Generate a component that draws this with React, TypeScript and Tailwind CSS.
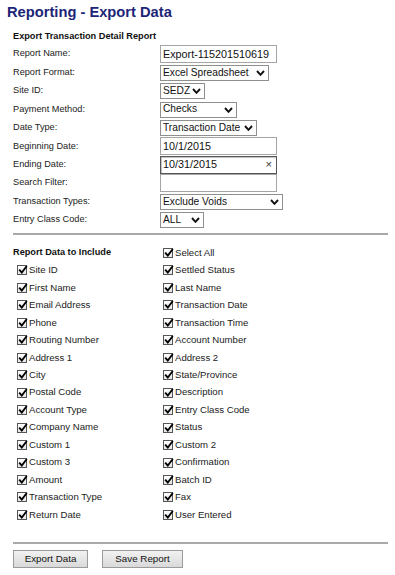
import React from "react";

const leftFields = [
  "Site ID",
  "First Name",
  "Email Address",
  "Phone",
  "Routing Number",
  "Address 1",
  "City",
  "Postal Code",
  "Account Type",
  "Company Name",
  "Custom 1",
  "Custom 3",
  "Amount",
  "Transaction Type",
  "Return Date",
];

const rightFields = [
  "Select All",
  "Settled Status",
  "Last Name",
  "Transaction Date",
  "Transaction Time",
  "Account Number",
  "Address 2",
  "State/Province",
  "Description",
  "Entry Class Code",
  "Status",
  "Custom 2",
  "Confirmation",
  "Batch ID",
  "Fax",
  "User Entered",
];

function Chevron() {
  return (
    <svg width="9" height="6" viewBox="0 0 9 6" className="shrink-0">
      <polyline points="1,1 4.5,4.8 8,1" fill="none" stroke="#111" strokeWidth="1.9" />
    </svg>
  );
}

function Select({ value, width }: { value: string; width: string }) {
  return (
    <div
      className={`${width} h-[16px] flex items-center justify-between gap-[2px] overflow-hidden border border-[#8f8f8f] bg-white pl-[2px] pr-[3px] text-[10.2px] leading-none text-[#111]`}
    >
      <span className="whitespace-nowrap">{value}</span>
      <Chevron />
    </div>
  );
}

function TextBox({ value, clear, focused }: { value: string; clear?: boolean; focused?: boolean }) {
  return (
    <div
      className={`w-[117px] h-[18px] flex items-center justify-between bg-white pl-[2px] pr-[4px] text-[10.8px] leading-none text-[#111] ${
        focused ? "border border-[#555] shadow-[inset_1px_1px_1px_rgba(0,0,0,0.25)]" : "border border-[#a5a5a5]"
      }`}
    >
      <span className="whitespace-nowrap">{value}</span>
      {clear && <span className="text-[11px] leading-none text-[#333]">×</span>}
    </div>
  );
}

function Box() {
  return (
    <span className="relative inline-block w-[10px] h-[10px] shrink-0 border border-[#555] bg-gradient-to-b from-white to-[#e6e6e6]">
      <svg width="10" height="10" viewBox="0 0 10 10" className="absolute left-[0px] top-[-1px]">
        <polyline points="1.2,4.6 3.8,7.6 8.8,1" fill="none" stroke="#000" strokeWidth="1.9" />
      </svg>
    </span>
  );
}

function Check({ label }: { label: string }) {
  return (
    <div className="h-[17.47px] flex items-center gap-[2px] text-[9.6px] text-[#222]">
      <Box />
      <span className="whitespace-nowrap">{label}</span>
    </div>
  );
}

const rows: { label: string; control: React.ReactNode }[] = [
  { label: "Report Name:", control: <TextBox value="Export-115201510619" /> },
  { label: "Report Format:", control: <Select value="Excel Spreadsheet" width="w-[109px]" /> },
  { label: "Site ID:", control: <Select value="SEDZ" width="w-[45px]" /> },
  { label: "Payment Method:", control: <Select value="Checks" width="w-[77px]" /> },
  { label: "Date Type:", control: <Select value="Transaction Date" width="w-[97px]" /> },
  { label: "Beginning Date:", control: <TextBox value="10/1/2015" /> },
  { label: "Ending Date:", control: <TextBox value="10/31/2015" clear focused /> },
  { label: "Search Filter:", control: <TextBox value="" /> },
  { label: "Transaction Types:", control: <Select value="Exclude Voids" width="w-[123px]" /> },
  { label: "Entry Class Code:", control: <Select value="ALL" width="w-[44px]" /> },
];

export default function App() {
  return (
    <div className="w-[395px] h-[575px] bg-white font-['Liberation_Sans',Arial,sans-serif] text-[#222]">
      <div className="h-[25px] flex items-center pl-[7px] text-[14.7px] font-bold text-[#1d2577]">
        Reporting - Export Data
      </div>
      <div className="h-[20px] pt-[4px] flex items-center pl-[13px] text-[9.2px] font-bold text-[#111]">
        Export Transaction Detail Report
      </div>
      <div className="pl-[13px]">
        {rows.map((r) => (
          <div key={r.label} className="h-[18.44px] flex items-center">
            <div className="w-[147px] text-[9.2px] text-[#222]">{r.label}</div>
            {r.control}
          </div>
        ))}
      </div>
      <div className="mx-[13px] mt-[4px] w-[375px] h-[2px] bg-[#a9a9a9]" />
      <div className="mt-[8.8px] pl-[13px] grid grid-cols-[150px_1fr]">
        <div className="flex flex-col">
          <div className="h-[17.47px] flex items-center text-[9.2px] font-bold text-[#111]">
            Report Data to Include
          </div>
          <div className="pl-[4px]">
            {leftFields.map((f) => (
              <Check key={f} label={f} />
            ))}
          </div>
        </div>
        <div className="flex flex-col">
          {rightFields.map((f) => (
            <Check key={f} label={f} />
          ))}
        </div>
      </div>
      <div className="mx-[13px] mt-[18px] w-[375px] h-[2px] bg-[#a9a9a9]" />
      <div className="mt-[6.5px] pl-[13px] flex gap-[14px]">
        <button className="w-[75px] h-[18px] border border-[#9a9a9a] bg-gradient-to-b from-[#f2f2f2] to-[#d9d9d9] text-[9.8px] text-[#111]">
          Export Data
        </button>
        <button className="w-[81px] h-[18px] border border-[#9a9a9a] bg-gradient-to-b from-[#f2f2f2] to-[#d9d9d9] text-[9.8px] text-[#111]">
          Save Report
        </button>
      </div>
    </div>
  );
}
